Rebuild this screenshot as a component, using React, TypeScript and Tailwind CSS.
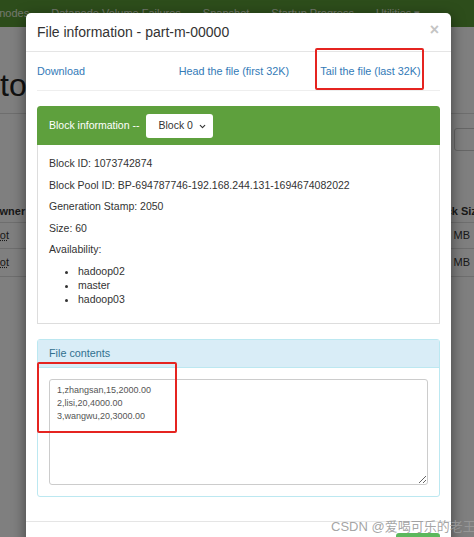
import { ChevronDown } from 'lucide-react';

const blockLines = [
  'Block ID: 1073742874',
  'Block Pool ID: BP-694787746-192.168.244.131-1694674082022',
  'Generation Stamp: 2050',
  'Size: 60',
  'Availability:',
];

const hosts = ['hadoop02', 'master', 'hadoop03'];

const navItems = ['Datanodes', 'Datanode Volume Failures', 'Snapshot', 'Startup Progress', 'Utilities ▾'];

export default function App() {
  return (
    <div
      className="relative w-full h-[537px] overflow-hidden bg-white text-[#333]"
      style={{ fontFamily: '"Liberation Sans", Arial, "Noto Sans CJK SC", sans-serif' }}
    >
      {/* page behind the dialog */}
      <div className="flex flex-col">
        <nav className="h-[27px] bg-[#5a9a36] flex items-center gap-[22px] ml-[-24px] text-[11px] text-[#e6f0dc] whitespace-nowrap">
          {navItems.map((n) => (
            <span key={n}>{n}</span>
          ))}
        </nav>
        <h1 className="mt-[38px] h-[40px] flex items-center text-[32px] text-[#222] leading-none">tory</h1>
        <div className="mt-[8px] border-t border-[#ddd]" />
        <div className="mt-[14px] h-[23px] flex justify-end">
          <div className="w-[80px] mr-[-60px] border border-[#ccc] rounded-[3px]" />
        </div>
        <div className="mt-[50px] flex flex-col text-[11px] whitespace-nowrap">
          <div className="h-[22px] flex items-center justify-between font-bold border-b border-[#ddd]">
            <span className="ml-[-9px]">Owner</span>
            <span className="mr-[-9px]">Block Size</span>
          </div>
          <div className="h-[26px] flex items-center justify-between border-b border-[#ddd]">
            <span className="ml-[-10px] underline decoration-dotted">root</span>
            <span className="mr-[4px]">128 MB</span>
          </div>
          <div className="h-[28px] flex items-center justify-between border-b border-[#ddd]">
            <span className="ml-[-10px] underline decoration-dotted">root</span>
            <span className="mr-[4px]">128 MB</span>
          </div>
        </div>
      </div>

      {/* backdrop */}
      <div className="absolute inset-0 bg-black/50" />

      {/* dialog */}
      <div className="absolute left-[26px] top-[13px] w-[425px] bg-white rounded-[5px] shadow-[0_4px_14px_rgba(0,0,0,0.5)]">
        <div className="h-[39px] px-[11px] flex items-center justify-between border-b border-[#e5e5e5]">
          <h4 className="text-[14px] text-[#333]">File information - part-m-00000</h4>
          <span className="text-[16px] font-bold text-[#c4c4c4] leading-none mr-[1px] mt-[-5px]">×</span>
        </div>

        <div className="px-[11px] pb-[9px]">
          <div className="-mx-[11px] grid grid-cols-3 h-[38px] items-center text-[10.8px] text-[#337ab7]">
            <span className="px-[11px]">Download</span>
            <span className="px-[11px]">Head the file (first 32K)</span>
            <span className="px-[11px]">Tail the file (last 32K)</span>
          </div>
          <div className="border-t border-[#eee]" />

          <div className="mt-[15px] border border-[#5ea03d] rounded-[3px]">
            <div className="h-[38px] px-[11px] bg-[#5ea03d] flex items-center text-[10.5px] text-white">
              <span>Block information --</span>
              <div className="relative ml-[7px] w-[67px] h-[24px]">
                <select className="w-full h-full appearance-none bg-white text-[#333] rounded-[3px] pl-[12px] text-[10.5px] outline-none">
                  <option>Block 0</option>
                </select>
                <ChevronDown size={9} strokeWidth={3} className="absolute right-[6px] top-[8px] text-[#333] pointer-events-none" />
              </div>
            </div>
            <div className="bg-white p-[11px] text-[10.5px] leading-[15px] text-[#333] border-t-0 border border-[#ddd] -m-px mt-0">
              {blockLines.map((l) => (
                <p key={l} className="mb-[6.5px]">{l}</p>
              ))}
              <ul className="list-disc pl-[29px] mb-[6.5px] leading-[14px]">
                {hosts.map((h) => (
                  <li key={h}>{h}</li>
                ))}
              </ul>
            </div>
          </div>

          <div className="mt-[15px] mb-[15px] border border-[#bce8f1] rounded-[3px]">
            <div className="h-[28px] px-[11px] bg-[#d9edf7] flex items-center text-[10.8px] text-[#31708f] border-b border-[#bce8f1]">
              File contents
            </div>
            <div className="p-[11px]">
              <textarea
                readOnly
                className="block w-full h-[106px] border border-[#ccc] rounded-[3px] px-[7px] py-[4px] text-[9px] leading-[13px] text-[#555] outline-none"
                defaultValue={'1,zhangsan,15,2000.00\n2,lisi,20,4000.00\n3,wangwu,20,3000.00'}
              />
            </div>
          </div>
        </div>

        <div className="border-t border-[#e5e5e5] px-[11px] pt-[11px] pb-[11px] flex justify-end">
          <button className="w-[44px] h-[24px] bg-[#5cb85c] rounded-[3px] text-[10.5px] text-white">Close</button>
        </div>
      </div>

      {/* red annotation boxes */}
      <div className="absolute left-[315px] top-[48px] w-[109px] h-[42px] border-2 border-[#e52420] rounded-[2px]" />
      <div className="absolute left-[37px] top-[362px] w-[140px] h-[71px] border-2 border-[#e52420] rounded-[2px]" />

      {/* watermark */}
      <div className="absolute left-[331px] top-[517px] text-[13px] text-[#9a9a9a]/90 whitespace-nowrap">
        CSDN @爱喝可乐的老王
      </div>
    </div>
  );
}
